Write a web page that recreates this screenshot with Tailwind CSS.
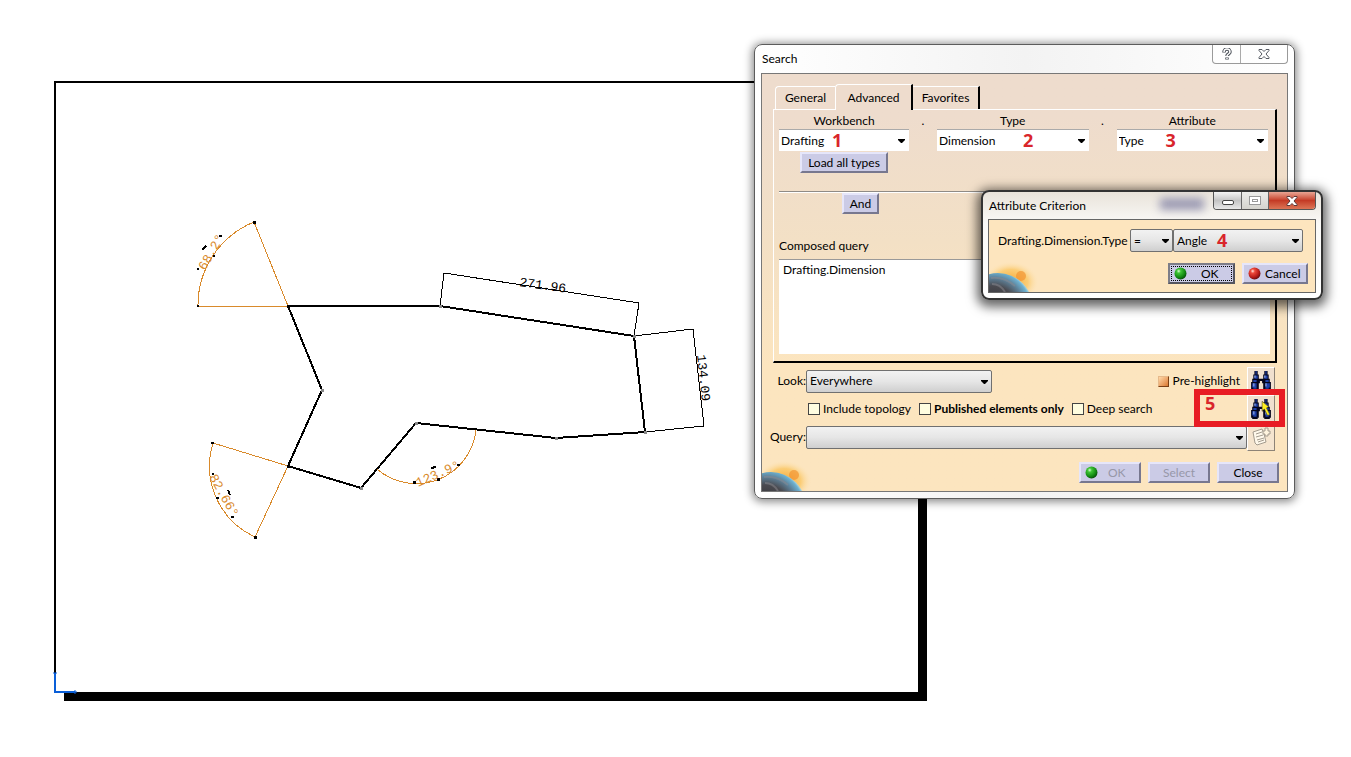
<!DOCTYPE html>
<html lang="en">
<head>
    <meta charset="UTF-8">
    <meta name="viewport" content="width=device-width, initial-scale=1.0">
    <title>Drafting - Search</title>
    <script src="https://cdn.jsdelivr.net/npm/@tailwindcss/browser@4"></script>
</head>
<body class="relative min-h-screen overflow-hidden bg-white font-['Lato','Open_Sans',sans-serif] text-[12px] leading-4 text-black">
    <!-- Shared symbols -->
    <svg class="absolute size-0">
        <defs>
            <radialGradient id="green-ball" cx="35%" cy="30%" r="70%">
                <stop offset="0" stop-color="#d8ffd0"/><stop offset=".25" stop-color="#3fc436"/><stop offset=".75" stop-color="#128a12"/><stop offset="1" stop-color="#0a560c"/>
            </radialGradient>
            <radialGradient id="red-ball" cx="35%" cy="30%" r="70%">
                <stop offset="0" stop-color="#ffe8e0"/><stop offset=".25" stop-color="#ee4a3c"/><stop offset=".75" stop-color="#b51a18"/><stop offset="1" stop-color="#6e1012"/>
            </radialGradient>
            <radialGradient id="glow" cx="50%" cy="55%" r="50%">
                <stop offset="0" stop-color="#f6a530"/><stop offset=".6" stop-color="#fac765" stop-opacity=".8"/><stop offset="1" stop-color="#fde7bf" stop-opacity="0"/>
            </radialGradient>
            <radialGradient id="globe-fill" gradientUnits="userSpaceOnUse" cx="4" cy="52" r="40">
                <stop offset="0" stop-color="#2b2a2c"/><stop offset=".6" stop-color="#4a4a50"/><stop offset=".8" stop-color="#5d7f96"/><stop offset=".95" stop-color="#6cb0d0"/><stop offset="1" stop-color="#a9d2dc"/>
            </radialGradient>
            <symbol id="arrow" viewBox="0 0 7 4"><path d="M0 0h7v1L4 4H3L0 1z" fill="#000"/></symbol>
            <symbol id="globe" viewBox="0 0 50 34">
                <ellipse cx="22" cy="22" rx="28" ry="21" fill="url(#glow)"/>
                <circle cx="32" cy="18" r="5" fill="#f28c28" opacity=".6"/>
                <circle cx="9" cy="50" r="35" fill="url(#globe-fill)"/>
                <path d="M2 20c8-1 17 2 24 8M3 26c5 0 10 3 13 8" fill="none" stroke="#8c8a90" stroke-width="2" opacity=".5"/>
            </symbol>
            <symbol id="binoculars" viewBox="0 0 20 20">
                <path d="M4 1h3v3h1v4h4V4h1V1h3v3h1v4h1v3h1v7h-1v1h-5v-1h-1v-6h-1v-2H9v2H8v6H7v1H2v-1H1v-7h1V8h1V4h1z" fill="#05051c"/>
                <path d="M5 1h1v3H5zM14 1h1v3h-1zM4 5h3v3H4zM13 5h3v3h-3zM3 9h3v2H3zM14 9h3v2h-3zM2 12h4v5H3v-1H2zM14 12h4v4h-1v1h-3z" fill="#1f3fa8"/>
                <path d="M4 5h1v2H4zM3 12h1v3H3zM14 12h1v3h-1zM13 5h1v2h-1z" fill="#9cb4e8"/>
            </symbol>
        </defs>
    </svg>

    <!-- Drawing sheet -->
    <svg class="absolute top-0 left-0" width="1351" height="757" viewBox="0 0 1351 757" fill="none">
        <path d="M55 692V82H922" stroke="#000" stroke-width="2"/>
        <path d="M64 692H918V82H927V701H64z" fill="#000"/>
        <path d="M55 673V692H75" stroke="#0a5fd8" stroke-width="2"/>
        <path d="M53 673h4M75 690v4M77 692h-3" stroke="#0a5fd8" stroke-width="1"/>
        <g shape-rendering="crispEdges">
            <path d="M288 306H440L634 336L645 432L556 438L416 423L361 488L288 466L322 390z" stroke="#000" stroke-width="2"/>
            <path d="M440 306L444 273L639 303L634 336L693 329L704 426L645 432" stroke="#000"/>
            <path d="M254 222L288 306H198A90 90 0 0 1 254 222M213 443L288 466L255 537A78 78 0 0 1 213 443M476 430A60 60 0 0 1 377 469" stroke="#d98a2b"/>
            <path d="M439 305h3v3h-3zM633 335h3v3h-3zM644 431h3v3h-3zM555 437h3v3h-3zM415 422h3v3h-3zM360 487h3v3h-3zM321 389h3v3h-3z" fill="#888"/>
            <path d="M287 305h3v3h-3zM287 465h3v3h-3zM197 305h2v2h-2zM253 221h3v3h-3zM213 255h2v2h-2zM211 442h3v2h-3zM254 536h3v3h-3zM212 473h2v2h-2zM216 497h3v2h-3zM231 516h3v2h-3zM413 481h3v3h-3zM437 478h3v3h-3zM457 464h3v2h-3z" fill="#000"/>
            <path d="M202 250l4-4M219 236h3M197 269h2M228 490l2 5M431 468l5-1" stroke="#000" stroke-width="2"/>
        </g>
        <g font-family="'Liberation Mono',monospace" font-size="13">
            <text transform="translate(519 286) rotate(8)" fill="#000">271.96</text>
            <text transform="translate(697 355) rotate(84)" fill="#000">134.09</text>
            <text transform="translate(205 271) rotate(-60)" fill="#d98a2b">68.2°</text>
            <text transform="translate(209 477) rotate(61)" fill="#d98a2b">82.66°</text>
            <text transform="translate(418 487) rotate(-24)" fill="#d98a2b">123.9°</text>
        </g>
    </svg>

    <!-- Search window -->
    <section class="absolute top-[44px] left-[754px] w-[541px] rounded-lg border border-[#5c5c5c] bg-linear-to-r from-white via-[#f3f3f3] to-white px-1.5 pb-1.5 shadow-[0_1px_8px_2px_rgba(0,0,0,0.45)]">
        <header class="flex h-7 items-start justify-between">
            <h1 class="pt-1.5 pl-px">Search</h1>
            <div class="flex h-[19px] overflow-hidden rounded-b border border-t-0 border-[#9a9a9a] bg-white/60">
                <button aria-label="Help" class="flex w-7 items-center justify-center border-r border-[#aaa]">
                    <svg width="10" height="13" viewBox="0 0 10 13" fill="none"><path d="M2 4.500V4a3 3 0 0 1 6 0c0 2-3 2-3 4M5 9.500v2" stroke="#4b5058" stroke-width="3.500"/><path d="M2 4V4a3 3 0 0 1 6 0c0 2-3 2-3 4M5 10v1" stroke="#fff" stroke-width="1.500"/></svg>
                </button>
                <button aria-label="Close window" class="flex w-[46px] items-center justify-center">
                    <svg width="12" height="10" viewBox="0 0 12 10"><path d="M1 .5h3l2 2 2-2h3v1L8 5l3 3.500v1H8l-2-2-2 2H1v-1L4 5 1 1.500z" fill="#fff" stroke="#555a62"/></svg>
                </button>
            </div>
        </header>

        <div class="relative border border-[#777] bg-linear-to-b from-[#eedccd] from-10% via-[#f3e0c5] via-40% to-[#fce5bf] to-70% pt-2.5 pr-2.5 pl-[11px]">
            <!-- Tabs -->
            <nav class="flex items-end pl-0.5" role="tablist">
                <button role="tab" class="h-[23px] w-[60px] rounded-tl border-t border-l border-white">General</button>
                <button role="tab" aria-selected="true" class="z-10 -mb-px h-[26px] w-[78px] rounded-tl border-t border-r-2 border-l border-t-white border-r-black border-l-white bg-[#eedccd]">Advanced</button>
                <button role="tab" class="h-[23px] w-[67px] border-t border-r-2 border-t-white border-r-black">Favorites</button>
            </nav>

            <!-- Advanced panel -->
            <div class="flex flex-col border-t border-r-2 border-b-2 border-l border-t-white border-r-black border-b-black border-l-white px-[5px] pt-[3px] pb-[7px]">
                <div class="flex">
                    <div class="flex w-[130px] flex-col items-center">
                        <label for="workbench" class="h-4">Workbench</label>
                        <div class="relative w-full">
                            <select id="workbench" class="block h-[22px] w-full appearance-none border-t border-[#aaa] bg-white px-0.5"><option>Drafting</option></select>
                            <svg class="pointer-events-none absolute top-[10px] right-1" width="7" height="4"><use href="#arrow"/></svg>
                            <span class="absolute top-0 left-[53px] font-['Open_Sans'] text-[18px] leading-[22px] font-bold text-[#d9252b]">1</span>
                        </div>
                        <button class="mt-px h-[21px] w-[88px] border-2 border-t-[#e6e6fa] border-r-[#77778f] border-b-[#77778f] border-l-[#e6e6fa] bg-[#cbcbe6]">Load all types</button>
                    </div>
                    <span class="w-7 text-center">.</span>
                    <div class="flex flex-1 flex-col items-center">
                        <label for="type" class="h-4">Type</label>
                        <div class="relative w-full">
                            <select id="type" class="block h-[22px] w-full appearance-none border-t border-[#aaa] bg-white px-0.5"><option>Dimension</option></select>
                            <svg class="pointer-events-none absolute top-[10px] right-1" width="7" height="4"><use href="#arrow"/></svg>
                            <span class="absolute top-0 left-[86px] font-['Open_Sans'] text-[18px] leading-[22px] font-bold text-[#d9252b]">2</span>
                        </div>
                    </div>
                    <span class="w-7 text-center">.</span>
                    <div class="mr-0.5 flex flex-1 flex-col items-center">
                        <label for="attribute" class="h-4">Attribute</label>
                        <div class="relative w-full">
                            <select id="attribute" class="block h-[22px] w-full appearance-none border-t border-[#aaa] bg-white px-0.5"><option>Type</option></select>
                            <svg class="pointer-events-none absolute top-[10px] right-1" width="7" height="4"><use href="#arrow"/></svg>
                            <span class="absolute top-0 left-[49px] font-['Open_Sans'] text-[18px] leading-[22px] font-bold text-[#d9252b]">3</span>
                        </div>
                    </div>
                </div>
                <hr class="mt-[18px] h-0.5 border-t border-b border-t-[#8f8b86] border-b-white">
                <button class="ml-[63px] h-[21px] w-[37px] border-2 border-t-[#e6e6fa] border-r-[#77778f] border-b-[#77778f] border-l-[#e6e6fa] bg-[#cbcbe6]">And</button>
                <label for="composed" class="mt-6">Composed query</label>
                <textarea id="composed" class="mt-[5px] block h-[95px] w-full resize-none border-t border-[#999] bg-white px-1 py-0.5">Drafting.Dimension</textarea>
            </div>

            <!-- Search options -->
            <div class="mt-1 mr-0.5 flex">
                <div class="flex flex-1 flex-col">
                    <div class="flex h-7 items-center">
                        <label for="look" class="w-[33px] text-right">Look:</label>
                        <div class="relative w-[186px]">
                            <select id="look" class="block h-[23px] w-full appearance-none rounded-xs border border-[#707070] bg-linear-to-b from-[#f2f2f2] via-[#e6e6e6] to-[#cfcfcf] px-[3px]"><option>Everywhere</option></select>
                            <svg class="pointer-events-none absolute top-[10px] right-1" width="7" height="4"><use href="#arrow"/></svg>
                        </div>
                        <label class="mr-[7px] ml-auto flex items-center gap-1"><input type="checkbox" checked class="size-[11px] appearance-none border border-t-[#e6b98a] border-r-[#7b3f14] border-b-[#7b3f14] border-l-[#e6b98a] bg-linear-to-br from-[#ffd9a8] to-[#d9782c]">Pre-highlight</label>
                    </div>
                    <div class="flex h-7 items-center gap-2 pl-[35px]">
                        <label class="flex items-center gap-[3px]"><input type="checkbox" class="size-3 appearance-none border border-[#444] bg-[#fffde0]">Include topology</label>
                        <label class="flex items-center gap-[3px] font-bold"><input type="checkbox" class="size-3 appearance-none border border-[#444] bg-[#fffde0]">Published elements only</label>
                        <label class="flex items-center gap-[3px]"><input type="checkbox" class="size-3 appearance-none border border-[#444] bg-[#fffde0]">Deep search</label>
                    </div>
                    <div class="flex h-7 items-center">
                        <label for="query" class="-ml-1.5 w-[39px] text-right">Query:</label>
                        <div class="relative flex-1">
                            <select id="query" class="block h-[23px] w-full appearance-none rounded-xs border border-[#707070] bg-linear-to-b from-[#f2f2f2] via-[#e6e6e6] to-[#cfcfcf]"><option></option></select>
                            <svg class="pointer-events-none absolute top-[10px] right-1" width="7" height="4"><use href="#arrow"/></svg>
                        </div>
                    </div>
                </div>
                <div class="relative flex w-7 flex-col">
                    <button aria-label="Search" class="flex h-7 items-center justify-center border border-t-white border-r-[#8d8376] border-b-[#8d8376] border-l-white bg-[#f0e0ce]"><svg width="22" height="22"><use href="#binoculars"/></svg></button>
                    <button aria-label="Search and select" class="flex h-7 items-center justify-center border border-t-white border-r-[#8d8376] border-b-[#8d8376] border-l-white bg-[#f0e0ce]">
                        <svg width="22" height="22" viewBox="0 0 20 20"><use href="#binoculars"/><path d="M11 3l6 5-2 1 3 6-2 1-3-6-2 2z" fill="#ffef1f" stroke="#333" stroke-width=".5"/></svg>
                    </button>
                    <button aria-label="Add to favorites" disabled class="flex h-7 items-center justify-center border border-t-white border-r-[#8d8376] border-b-[#8d8376] border-l-white bg-[#f5e5cf]">
                        <svg width="20" height="20" viewBox="0 0 20 20" fill="none"><path d="M2 5l9-3 2 5 2 8-9 3-2-2zM5 7l6-2M5 10l7-2M6 13l7-2M7 15l6-2" fill="#fff9ec" stroke="#a39b8e"/><path d="M14 1h3v3h2v3h-2v2h-3V7h-2V4h2z" fill="#fff4de" stroke="#a39b8e"/></svg>
                    </button>
                    <div class="pointer-events-none absolute top-[22px] -right-[10px] h-[38px] w-[91px] border-6 border-[#e81c24]">
                        <span class="absolute -top-[3px] left-[5px] font-['Open_Sans'] text-[18px] leading-[22px] font-bold text-[#d9252b]">5</span>
                    </div>
                </div>
            </div>

            <!-- Actions -->
            <div class="-mr-0.5 mt-[11px] mb-2 flex justify-end gap-[7px]">
                <button disabled class="flex h-[21px] w-[62px] items-center gap-2.5 border-2 border-t-[#e6e6fa] border-r-[#77778f] border-b-[#77778f] border-l-[#e6e6fa] bg-[#cbcbe6] pl-1 text-[#9797a8]"><svg width="13" height="13"><circle cx="6.500" cy="6.500" r="6" fill="url(#green-ball)"/></svg>OK</button>
                <button disabled class="h-[21px] w-[62px] border-2 border-t-[#e6e6fa] border-r-[#77778f] border-b-[#77778f] border-l-[#e6e6fa] bg-[#cbcbe6] text-[#9797a8]">Select</button>
                <button class="h-[21px] w-[62px] border-2 border-t-[#e6e6fa] border-r-[#77778f] border-b-[#77778f] border-l-[#e6e6fa] bg-[#cbcbe6]">Close</button>
            </div>
            <svg class="absolute bottom-0 left-0" width="50" height="34"><use href="#globe"/></svg>
        </div>
    </section>

    <!-- Attribute Criterion window -->
    <section class="absolute top-[190px] left-[981px] w-[342px] rounded-lg border-2 border-[#333] bg-linear-to-b from-[#e9e3da] via-[#faf9f7] via-30% to-white px-[5px] pb-[5px] shadow-[0_3px_11px_4px_rgba(0,0,0,0.6)]">
        <header class="relative flex h-[27px] items-start justify-between">
            <span class="absolute top-1.5 left-[172px] h-3 w-11 bg-[#77779e]/70 blur-[4px]"></span>
            <h2 class="relative pt-1.5 pl-px">Attribute Criterion</h2>
            <div class="relative flex h-[18px] overflow-hidden rounded-b border border-t-0 border-[#555]">
                <button aria-label="Minimize" class="flex w-7 items-end justify-center border-r border-[#666] bg-linear-to-b from-[#f4f4f4] via-[#c4c4c4] to-[#e8e8e8] pb-1"><span class="h-[5px] w-3 rounded-xs border border-[#444] bg-white"></span></button>
                <button aria-label="Maximize" disabled class="flex w-[27px] items-center justify-center border-r border-[#666] bg-linear-to-b from-[#ececea] to-[#d5d4ce]"><span class="flex h-[9px] w-3 items-center justify-center border border-[#999] bg-white"><span class="h-[3px] w-1.5 border border-[#999]"></span></span></button>
                <button aria-label="Close dialog" class="flex w-[46px] items-center justify-center bg-linear-to-b from-[#e8a493] via-[#c43a25] to-[#dc7455]">
                    <svg width="12" height="10" viewBox="0 0 12 10"><path d="M1 .5h3l2 2 2-2h3v1L8 5l3 3.500v1H8l-2-2-2 2H1v-1L4 5 1 1.500z" fill="#fff" stroke="#5c3a38"/></svg>
                </button>
            </div>
        </header>
        <div class="relative border border-[#666] bg-[#fde5be] pt-[9px] pr-3 pb-2 pl-[9px]">
            <div class="flex items-center">
                <label for="operator" class="w-[132px] whitespace-nowrap">Drafting.Dimension.Type</label>
                <div class="relative w-[43px]">
                    <select id="operator" class="block h-[23px] w-full appearance-none rounded-xs border border-[#707070] bg-linear-to-b from-[#f2f2f2] via-[#e6e6e6] to-[#cfcfcf] px-[3px]"><option>=</option></select>
                    <svg class="pointer-events-none absolute top-[10px] right-1" width="7" height="4"><use href="#arrow"/></svg>
                </div>
                <div class="relative flex-1">
                    <select id="value" aria-label="Value" class="block h-[23px] w-full appearance-none rounded-xs border border-[#707070] bg-linear-to-b from-[#f2f2f2] via-[#e6e6e6] to-[#cfcfcf] px-[3px]"><option>Angle</option></select>
                    <svg class="pointer-events-none absolute top-[10px] right-1" width="7" height="4"><use href="#arrow"/></svg>
                    <span class="absolute top-0 left-[44px] font-['Open_Sans'] text-[18px] leading-[22px] font-bold text-[#d9252b]">4</span>
                </div>
            </div>
            <div class="-mr-[5px] mt-[11px] flex justify-end gap-[7px]">
                <button class="flex h-[21px] w-[67px] border-2 border-t-[#7d7d88] border-r-[#55555f] border-b-[#55555f] border-l-[#7d7d88] bg-[#cbcbe6] p-px"><span class="flex h-full w-full items-center gap-3.5 border border-dotted border-black pl-0.5"><svg width="13" height="13"><circle cx="6.500" cy="6.500" r="6" fill="url(#green-ball)"/></svg>OK</span></button>
                <button class="flex h-[21px] w-[66px] items-center gap-1 border-2 border-t-[#e6e6fa] border-r-[#77778f] border-b-[#77778f] border-l-[#e6e6fa] bg-[#cbcbe6] pl-1"><svg width="13" height="13"><circle cx="6.500" cy="6.500" r="6" fill="url(#red-ball)"/></svg>Cancel</button>
            </div>
            <svg class="absolute bottom-0 left-0" width="50" height="34"><use href="#globe"/></svg>
        </div>
    </section>
</body>
</html>
